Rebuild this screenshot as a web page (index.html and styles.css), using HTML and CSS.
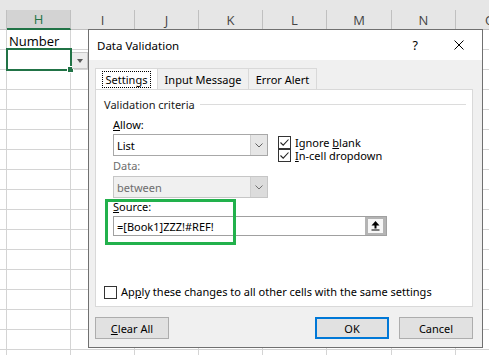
FILE: index.html
```html
<!DOCTYPE html>
<html lang="en">
<head>
  <meta charset="UTF-8">
  <meta name="viewport" content="width=device-width, initial-scale=1.0">
  <title>Data Validation</title>
  <link rel="stylesheet" href="styles.css">
</head>
<body>
  <!-- Worksheet -->
  <div class="sheet">
    <div class="top-strip"></div>
    <div class="row heads">
      <div></div>
      <div class="active">H</div>
      <div>I</div>
      <div>J</div>
      <div>K</div>
      <div>L</div>
      <div>M</div>
      <div>N</div>
      <div>O</div>
    </div>
    <div id="rows"></div>

    <div class="selected"><span class="handle"></span></div>
    <div class="cell-drop"><span class="tri"></span></div>

    <!-- Data Validation dialog -->
    <div class="dialog">
      <div class="titlebar">
        <span class="title">Data Validation</span>
        <span class="help">?</span>
        <svg class="close" width="10" height="10" viewBox="0 0 10 10">
          <path d="M0.5 0.5 L9.5 9.5 M9.5 0.5 L0.5 9.5" stroke="#000" stroke-width="1" fill="none"/>
        </svg>
      </div>

      <div class="dlg-body">
        <div class="tabs">
          <div class="tab active"><span class="focus">Settings</span></div>
          <div class="tab">Input Message</div>
          <div class="tab">Error Alert</div>
        </div>

        <div class="panel">
          <div class="group-title">Validation criteria</div>

          <div class="criteria">
            <div class="fields">
              <div class="lbl"><u>A</u>llow:</div>
              <div class="combo">
                <span class="value">List</span>
                <span class="drop">
                  <svg width="8" height="5" viewBox="0 0 8 5"><path d="M0.5 0.5 L4 4 L7.5 0.5" stroke="#606060" fill="none"/></svg>
                </span>
              </div>
              <div class="lbl disabled">Data:</div>
              <div class="combo disabled">
                <span class="value">between</span>
                <span class="drop">
                  <svg width="8" height="5" viewBox="0 0 8 5"><path d="M0.5 0.5 L4 4 L7.5 0.5" stroke="#707070" fill="none"/></svg>
                </span>
              </div>
            </div>

            <div class="checks">
              <div class="check">
                <span class="box"><svg width="11" height="11" viewBox="0 0 11 11"><path d="M1.5 5.5 L4.2 8.2 L9.5 2.5" stroke="#222" stroke-width="1.1" fill="none"/></svg></span>
                Ignore&nbsp;<u>b</u>lank
              </div>
              <div class="check">
                <span class="box"><svg width="11" height="11" viewBox="0 0 11 11"><path d="M1.5 5.5 L4.2 8.2 L9.5 2.5" stroke="#222" stroke-width="1.1" fill="none"/></svg></span>
                <u>I</u>n-cell dropdown
              </div>
            </div>
          </div>

          <div class="source">
            <div class="lbl"><u>S</u>ource:</div>
            <div class="src-input">
              <span class="value">=[Book1]ZZZ!#REF!</span>
              <span class="range-btn">
                <svg width="15" height="14" viewBox="0 0 15 14">
                  <path d="M7.5 2 L3.5 6.5 L11.5 6.5 Z" fill="#000"/>
                  <rect x="6.5" y="6" width="2" height="3.5" fill="#000"/>
                  <rect x="3.5" y="10.5" width="8" height="1" fill="#000"/>
                </svg>
              </span>
            </div>
            <div class="highlight"></div>
          </div>

          <div class="check apply">
            <span class="box"></span>
            Ap<u>p</u>ly these changes to all other cells with the same settings
          </div>
        </div>

        <div class="buttons">
          <div class="btn clear"><span><u>C</u>lear All</span></div>
          <div class="btn ok">OK</div>
          <div class="btn">Cancel</div>
        </div>
      </div>
    </div>
  </div>

  <script>
    // Fill the worksheet with empty rows
    const rows = document.getElementById('rows');
    for (let r = 0; r < 17; r++) {
      const row = document.createElement('div');
      row.className = 'row';
      for (let c = 0; c < 9; c++) {
        const cell = document.createElement('div');
        cell.className = 'cell';
        if (r === 0 && c === 1) cell.textContent = 'Number';
        row.appendChild(cell);
      }
      rows.appendChild(row);
    }
  </script>
</body>
</html>
```

FILE: styles.css
```css
* {
  box-sizing: border-box;
}

body {
  margin: 0;
  background: #fff;
  font-family: "Open Sans", sans-serif;
  overflow: hidden;
}

/* Worksheet */
.sheet {
  position: relative;
  width: 489px;
  height: 355px;
  overflow: hidden;
}

.top-strip {
  height: 10px;
  background: #e6e6e6;
}

.row {
  display: grid;
  grid-template-columns: 7px 64px 64px 64px 64px 64px 65px 64px 64px;
  height: 20px;
}

.row > div {
  border-right: 1px solid #d4d4d4;
  border-bottom: 1px solid #d4d4d4;
}

.heads {
  background: #e6e6e6;
}

.heads > div {
  border-color: #c0c0c0;
  font-size: 13px;
  color: #444;
  display: flex;
  align-items: center;
  justify-content: center;
  overflow: hidden;
}

.heads > div:last-child {
  justify-content: flex-start;
  padding-left: 29px;
}

.heads .active {
  background: #d3d3d3;
  color: #217346;
  border-bottom: 2px solid #217346;
}

.cell {
  font-size: 13px;
  line-height: 16px;
  padding-left: 2px;
  display: flex;
  align-items: flex-end;
  color: #000;
  white-space: nowrap;
}

.selected {
  position: absolute;
  left: 6px;
  top: 48px;
  width: 66px;
  height: 23px;
  border: 2px solid #217346;
}

.selected .handle {
  position: absolute;
  right: -4px;
  bottom: -4px;
  width: 7px;
  height: 7px;
  background: #217346;
  border: 1px solid #fff;
}

.cell-drop {
  position: absolute;
  left: 72px;
  top: 52px;
  width: 16px;
  height: 17px;
  background: #ececec;
  border: 1px solid #c8c8c8;
  border-left: none;
  display: flex;
  align-items: center;
  justify-content: center;
}

.cell-drop .tri {
  width: 0;
  height: 0;
  border-left: 3.5px solid transparent;
  border-right: 3.5px solid transparent;
  border-top: 4px solid #595959;
}

/* Dialog */
.dialog {
  position: absolute;
  left: 88px;
  top: 29px;
  width: 395px;
  height: 319px;
  border: 1px solid #707070;
  background: #f0f0f0;
  display: flex;
  flex-direction: column;
  font-family: "Noto Sans", sans-serif;
  font-size: 11px;
  color: #000;
  white-space: nowrap;
}

.titlebar {
  height: 30px;
  flex-shrink: 0;
  background: #fff;
  display: flex;
  align-items: center;
  padding-left: 8px;
  font-size: 11.5px;
}

.titlebar .title {
  flex: 1;
}

.titlebar .help {
  font-size: 12.5px;
  margin-right: 36px;
}

.titlebar .close {
  margin-right: 18px;
}

.dlg-body {
  flex: 1;
  padding: 8px 9px 8px 6px;
  display: flex;
  flex-direction: column;
}

.tabs {
  display: flex;
  height: 21px;
}

.tab {
  border: 1px solid #d9d9d9;
  border-bottom: none;
  margin-right: -1px;
  background: #f0f0f0;
  display: flex;
  align-items: center;
  justify-content: center;
  width: 92px;
}

.tab:first-child {
  width: 63px;
}

.tab:last-child {
  width: 69px;
}

.tab.active {
  background: #fff;
}

.tab .focus {
  border: 1px dotted #000;
  padding: 0 3px;
  line-height: 15px;
}

.panel {
  height: 218px;
  flex-shrink: 0;
  background: #fff;
  border: 1px solid #d9d9d9;
  padding: 7px 6px 0 8px;
  display: flex;
  flex-direction: column;
}

.group-title {
  display: flex;
  align-items: center;
  height: 14px;
  color: #1a1a1a;
}

.group-title::after {
  content: "";
  flex: 1;
  height: 1px;
  background: #dcdcdc;
  margin-left: 5px;
}

.criteria {
  display: flex;
  gap: 10px;
  margin: 6px 0 0 9px;
}

.fields {
  width: 155px;
  display: flex;
  flex-direction: column;
}

.lbl {
  height: 16px;
  line-height: 16px;
}

.lbl.disabled {
  color: #6d6d6d;
  margin-top: 2px;
}

.combo {
  height: 22px;
  margin-top: 1px;
  border: 1px solid #a8a8a8;
  background: #fff;
  display: flex;
  align-items: center;
}

.combo.disabled {
  margin-top: 2px;
  border-color: #c6c6c6;
  background: #f0f0f0;
  color: #6d6d6d;
}

.combo .value {
  flex: 1;
  padding-left: 3px;
}

.combo .drop {
  width: 17px;
  align-self: stretch;
  background: #e6e6e6;
  border-left: 1px solid #cfcfcf;
  display: flex;
  align-items: center;
  justify-content: center;
}

.combo.disabled .drop {
  background: #dcdcdc;
}

.checks {
  margin-top: 19px;
  display: flex;
  flex-direction: column;
}

.check {
  display: flex;
  align-items: center;
  height: 13px;
  line-height: 13px;
}

.check .box {
  width: 13px;
  height: 13px;
  border: 1px solid #333;
  background: #fff;
  margin-right: 4px;
  flex-shrink: 0;
}

.check .box svg {
  display: block;
}

.source {
  position: relative;
  margin: 1px 0 0 9px;
}

.src-input {
  width: 274px;
  height: 20px;
  margin-top: 1px;
  border: 1px solid #a0a0a0;
  display: flex;
  align-items: center;
}

.src-input .value {
  flex: 1;
  padding-left: 3px;
}

.range-btn {
  width: 21px;
  align-self: stretch;
  background: #b4b4b4;
  padding: 2px 3px;
}

.range-btn svg {
  display: block;
  background: #f6f6f6;
}

.highlight {
  position: absolute;
  left: -8px;
  top: 0;
  width: 131px;
  height: 46px;
  border: 3px solid #22b14c;
}

.check.apply {
  height: 16px;
  line-height: 16px;
  margin-top: 48px;
}

.buttons {
  display: flex;
  gap: 10px;
  margin-top: 10px;
}

.btn {
  width: 74px;
  height: 22px;
  border: 1px solid #adadad;
  background: #e1e1e1;
  display: flex;
  align-items: center;
  justify-content: center;
}

.btn.clear {
  margin-right: auto;
}

.btn.ok {
  border: 2px solid #0078d7;
}
```
